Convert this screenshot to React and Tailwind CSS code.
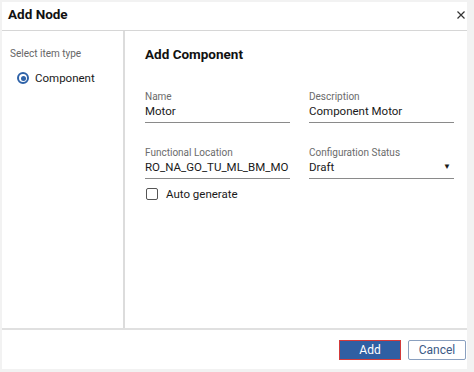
export default function App() {
  return (
    <div className="w-[474px] h-[372px] bg-[#f2f2f2] p-[2px] pr-[7px] pb-[3px] font-['Roboto',sans-serif] text-[#1a1a1a]">
      <div className="h-full bg-white flex flex-col">
        <div className="h-[29px] flex items-center justify-between pl-[6px] pr-[2px] pb-[3px] border-b border-[#d6d6d6]">
          <h1 className="text-[13.5px] font-bold text-[#111]">Add Node</h1>
          <svg width="8" height="8" viewBox="0 0 8 8" className="text-[#333]">
            <path d="M0.5 0.5L7.5 7.5M7.5 0.5L0.5 7.5" stroke="currentColor" strokeWidth="1.2" />
          </svg>
        </div>
        <div className="flex flex-1 border-b-2 border-[#e0e0e0]">
          <div className="w-[123px] border-r-2 border-[#dcdcdc] pl-[8px] pt-[17px]">
            <p className="text-[10px] leading-[12px] text-[#666]">Select item type</p>
            <div className="flex items-center gap-[6px] mt-[10px] ml-[7px]">
              <span className="w-[12px] h-[12px] rounded-full border-2 border-[#2e62a8] flex items-center justify-center">
                <span className="w-[5px] h-[5px] rounded-full bg-[#2e62a8]"></span>
              </span>
              <span className="text-[11.5px] leading-[16px]">Component</span>
            </div>
          </div>
          <div className="flex-1 pl-[20px] pr-[10px] pt-[13px]">
            <h2 className="text-[13.5px] leading-[20px] font-bold text-[#111]">Add Component</h2>
            <div className="grid grid-cols-[145px_145px] gap-x-[19px] gap-y-[24px] mt-[27px]">
              <Field label="Name" value="Motor" />
              <Field label="Description" value="Component Motor" />
              <Field label="Functional Location" value="RO_NA_GO_TU_ML_BM_MO" />
              <Field label="Configuration Status" value="Draft" select />
            </div>
            <div className="flex items-center gap-[8px] mt-[8px] ml-[1px]">
              <span className="w-[12px] h-[12px] border-[1.5px] border-[#555] rounded-[2px]"></span>
              <span className="text-[11.5px] leading-[14px]">Auto generate</span>
            </div>
          </div>
        </div>
        <div className="h-[39px] flex items-center justify-end gap-[7px] pr-[1px]">
          <button className="w-[62px] h-[20px] bg-[#2f5fa3] text-white text-[12px] border border-[#d33a3a]">
            Add
          </button>
          <button className="w-[58px] h-[20px] bg-white text-[#3b5a86] text-[12px] border border-[#8aa0bf] rounded-[2px]">
            Cancel
          </button>
        </div>
      </div>
    </div>
  );
}

function Field({ label, value, select }) {
  return (
    <div className="border-b border-[#8a8a8a] pb-[3px]">
      <p className="text-[10px] text-[#6b6b6b] leading-[12px]">{label}</p>
      <div className="flex items-center justify-between">
        <span className="text-[11.5px] leading-[16px]">{value}</span>
        {select && <span className="text-[8px] mr-[3px]">▼</span>}
      </div>
    </div>
  );
}
